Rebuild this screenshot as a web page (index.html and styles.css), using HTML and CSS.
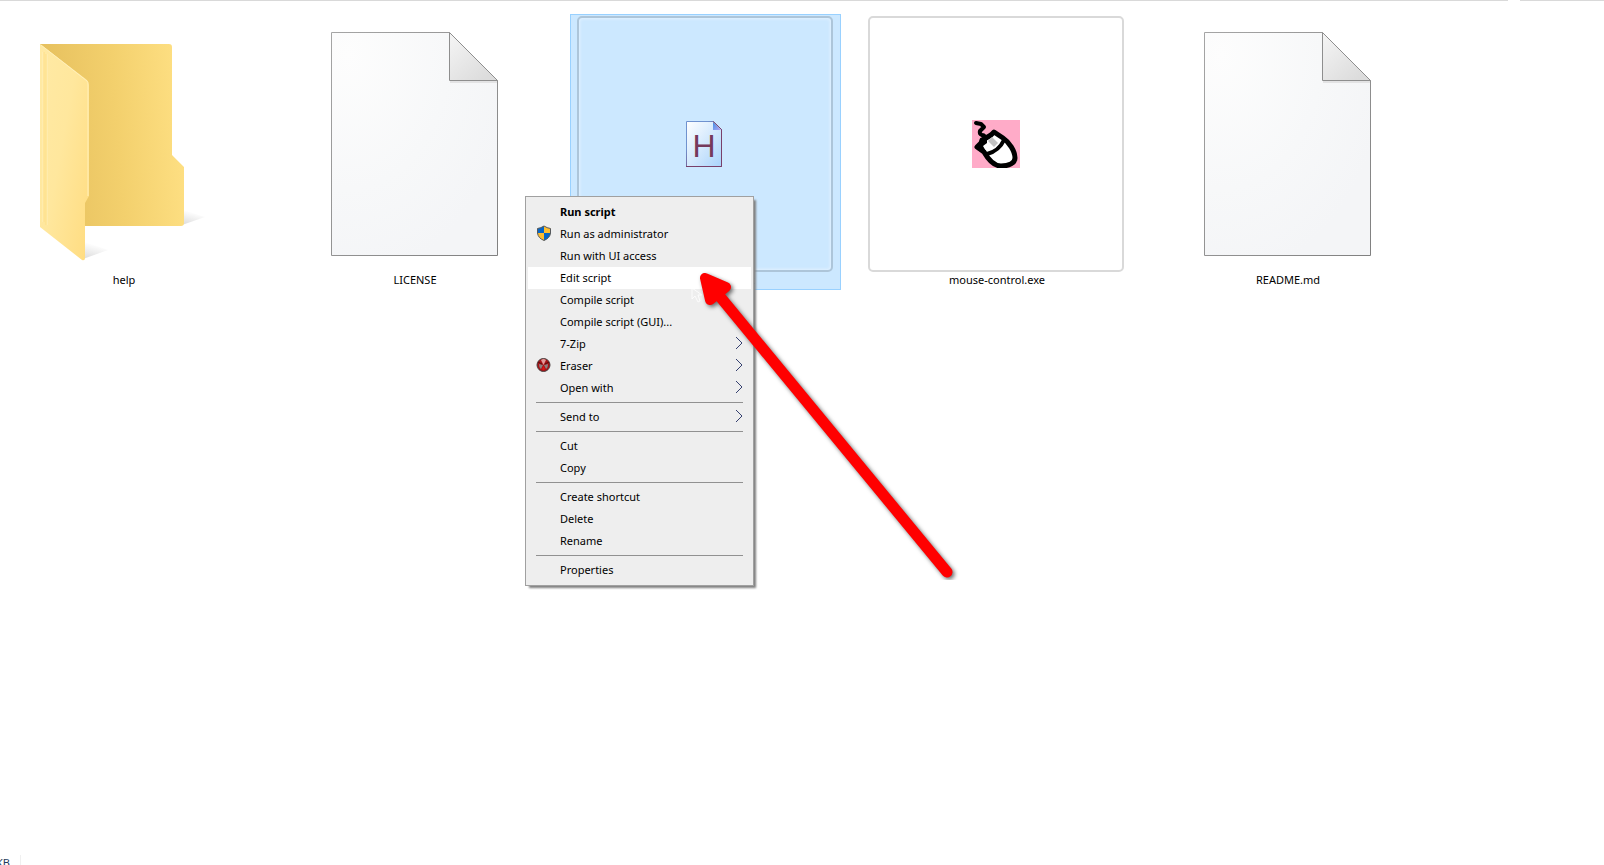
FILE: index.html
```html
<!DOCTYPE html>
<html lang="en">
	<head>
		<meta charset="utf-8">
		<title>mouse-control</title>
		<meta name="viewport" content="width=device-width, initial-scale=1">
		<link rel="stylesheet" href="styles.css">
	</head>
	<body>
		<div class="topline"><span class="line-main"></span><span class="line-end"></span></div>

		<main class="files">
			<button type="button" class="file">
				<svg class="thumb" viewBox="0 0 256 256" aria-hidden="true">
					<defs>
						<linearGradient id="back" x1="0" y1="0.1" x2="1" y2="0">
							<stop offset="0" stop-color="#e6c05e"/>
							<stop offset="0.5" stop-color="#f3d06d"/>
							<stop offset="1" stop-color="#ffe185"/>
						</linearGradient>
						<linearGradient id="front" x1="0" y1="0.2" x2="1" y2="1">
							<stop offset="0" stop-color="#ffe9a3"/>
							<stop offset="0.4" stop-color="#ffe79d"/>
							<stop offset="1" stop-color="#ffdc80"/>
						</linearGradient>
						<linearGradient id="shade" x1="0" y1="1" x2="0.4" y2="0">
							<stop offset="0" stop-color="#dadada"/>
							<stop offset="0.9" stop-color="#ffffff"/>
						</linearGradient>
					</defs>
					<path d="M189 194L210 201L187 209Z" fill="url(#shade)"/>
					<path d="M90 226L113 234L88 243Z" fill="url(#shade)"/>
					<path d="M45 28H174Q177 28 177 31V139L189 151V207Q189 210 186 210H85Z" fill="url(#back)"/>
					<path d="M45 28L92 64Q94 66 94 69V180L90 187V242Q90 245 87 244L45 211Z" fill="url(#front)"/>
					<path d="M48 36V206M52 38V209" stroke="#fff0bb" fill="none"/>
					<path d="M49 36V206M51 38V209" stroke="#ffdf86" fill="none"/>
					<path d="M46 29L92 65Q93 66 93 69V180" stroke="#fff0ba" fill="none"/>
				</svg>
				<span class="name">help</span>
			</button>

			<button type="button" class="file">
				<svg class="thumb" viewBox="0 0 256 256" aria-hidden="true">
					<defs>
						<radialGradient id="paper" cx="0.1" cy="0.1" r="1">
							<stop offset="0" stop-color="#fdfdfd"/>
							<stop offset="0.6" stop-color="#f7f8f9"/>
							<stop offset="1" stop-color="#f4f5f7"/>
						</radialGradient>
						<linearGradient id="fold" x1="0" y1="0.2" x2="0.7" y2="1">
							<stop offset="0" stop-color="#f2f2f2"/>
							<stop offset="1" stop-color="#dcdcdc"/>
						</linearGradient>
						<linearGradient id="edge" x1="0" y1="0" x2="1" y2="1">
							<stop offset="0" stop-color="#a5a5a5"/>
							<stop offset="1" stop-color="#808080"/>
						</linearGradient>
					</defs>
					<path d="M45.500 16.500H163.500L211.500 64.500V239.500H45.500Z" fill="url(#paper)" stroke="url(#edge)"/>
					<path d="M164 66H211" stroke="#e3e3e4" stroke-width="2"/>
					<path d="M163.500 16.500L211.500 64.500H163.500Z" fill="url(#fold)" stroke="#8e8e8e"/>
				</svg>
				<span class="name">LICENSE</span>
			</button>

			<button type="button" class="file selected">
				<span class="thumb framed">
					<svg class="small-icon" viewBox="0 0 48 48" aria-hidden="true">
						<defs>
							<linearGradient id="sheet" x1="0" y1="0" x2="1" y2="1">
								<stop offset="0" stop-color="#ffffff"/>
								<stop offset="1" stop-color="#a9d3fb"/>
							</linearGradient>
							<linearGradient id="sheetEdge" x1="0" y1="0" x2="1" y2="1">
								<stop offset="0.3" stop-color="#6f92cf"/>
								<stop offset="0.7" stop-color="#7b3f6c"/>
							</linearGradient>
							<linearGradient id="corner" x1="0" y1="0" x2="1" y2="1">
								<stop offset="0" stop-color="#3f8fe4"/>
								<stop offset="1" stop-color="#b5a6f5"/>
							</linearGradient>
						</defs>
						<path d="M5.500 1.500H32.500L40.500 9.500V46.500H5.500Z" fill="url(#sheet)" stroke="url(#sheetEdge)"/>
						<path d="M32 2V10H40Z" fill="url(#corner)"/>
						<path d="M32 1.500L40.500 9.500V46.500H5" fill="none" stroke="#79406a"/>
						<text x="23" y="37" class="letter">H</text>
					</svg>
				</span>
				<span class="name">mouse-control.ahk</span>
			</button>

			<button type="button" class="file">
				<span class="thumb framed">
					<svg class="small-icon" viewBox="0 0 48 48" aria-hidden="true">
						<rect width="48" height="48" fill="#ffabc8"/>
						<path d="M4 3L9 4L12 7L8 11Q7 14 10 15Q13 15 14 19" fill="none" stroke="#000" stroke-width="4" stroke-linejoin="round" stroke-linecap="round"/>
						<path d="M22 12L19 15L14 18L10 20L9 23L5 27L12 32C16 39 21 46 29 46C37 46 43 43 43 38C43 31 37 22 31 18Z" fill="#fff" stroke="#000" stroke-width="5" stroke-linejoin="round"/>
						<path d="M5 27L10 20L15 18L15 23L11 26L15 33L11 32Z"/>
						<path d="M16 21L20 17L26 23L22 27Z" fill="#c2c2c2"/>
						<path d="M32 20Q27 31 15 34" fill="none" stroke="#000" stroke-width="4"/>
					</svg>
				</span>
				<span class="name">mouse-control.exe</span>
			</button>

			<button type="button" class="file">
				<svg class="thumb" viewBox="0 0 256 256" aria-hidden="true">
					<path d="M45.500 16.500H163.500L211.500 64.500V239.500H45.500Z" fill="url(#paper)" stroke="url(#edge)"/>
					<path d="M164 66H211" stroke="#e3e3e4" stroke-width="2"/>
					<path d="M163.500 16.500L211.500 64.500H163.500Z" fill="url(#fold)" stroke="#8e8e8e"/>
				</svg>
				<span class="name">README.md</span>
			</button>
		</main>

		<footer class="status"><span>KB</span></footer>

		<!-- context menu -->
		<div class="menu">
			<button type="button" class="item default"><span class="icon"></span>Run script</button>
			<button type="button" class="item">
				<svg class="icon" viewBox="0 0 16 16" aria-hidden="true">
					<path d="M8 1Q5 3 1.500 3.500V8Q2 13 8 15.500Q14 13 14.500 8V3.500Q11 3 8 1Z" fill="#ffbe2e"/>
					<path d="M8 1Q5 3 1.500 3.500V8H8ZM8 8H14.500Q14 13 8 15.500Z" fill="#0766c6"/>
					<path d="M8 1Q5 3 1.500 3.500V8Q2 13 8 15.500Q14 13 14.500 8V3.500Q11 3 8 1Z" fill="none" stroke="#56595c"/>
				</svg>Run as administrator
			</button>
			<button type="button" class="item"><span class="icon"></span>Run with UI access</button>
			<button type="button" class="item hover"><span class="icon"></span>Edit script</button>
			<button type="button" class="item"><span class="icon"></span>Compile script</button>
			<button type="button" class="item"><span class="icon"></span>Compile script (GUI)...</button>
			<button type="button" class="item"><span class="icon"></span>7-Zip
				<svg class="sub" viewBox="0 0 8 12" aria-hidden="true"><path d="M1 0L7 6L1 12"/></svg>
			</button>
			<button type="button" class="item">
				<svg class="icon" viewBox="0 0 16 16" aria-hidden="true">
					<circle cx="7.500" cy="8" r="6.500" fill="#a81216" stroke="#4a4040"/>
					<path d="M7.500 8L5 3Q7.500 1 10 3Z" fill="#e09a9a"/>
					<path d="M7 8L3 7Q3 11 5 12ZM8 8L12 7Q12 11 10 12Z" fill="#8f7f7f"/>
					<path d="M6 12L7.500 9L9 12Q7.500 14 6 12Z" fill="#e01515"/>
					<path d="M2 5L6 7M13 5L9 7" stroke="#5c0a0c"/>
				</svg>Eraser
				<svg class="sub" viewBox="0 0 8 12" aria-hidden="true"><path d="M1 0L7 6L1 12"/></svg>
			</button>
			<button type="button" class="item"><span class="icon"></span>Open with
				<svg class="sub" viewBox="0 0 8 12" aria-hidden="true"><path d="M1 0L7 6L1 12"/></svg>
			</button>
			<hr>
			<button type="button" class="item"><span class="icon"></span>Send to
				<svg class="sub" viewBox="0 0 8 12" aria-hidden="true"><path d="M1 0L7 6L1 12"/></svg>
			</button>
			<hr>
			<button type="button" class="item"><span class="icon"></span>Cut</button>
			<button type="button" class="item"><span class="icon"></span>Copy</button>
			<hr>
			<button type="button" class="item"><span class="icon"></span>Create shortcut</button>
			<button type="button" class="item"><span class="icon"></span>Delete</button>
			<button type="button" class="item"><span class="icon"></span>Rename</button>
			<hr>
			<button type="button" class="item"><span class="icon"></span>Properties</button>
		</div>

		<!-- red arrow over the menu, with the mouse pointer beside it -->
		<svg class="arrow" viewBox="0 0 280 320" aria-hidden="true">
			<path d="M12 28V39L15 36L18 42L20 41L18 35H22Z" fill="none" stroke="#fff" stroke-opacity="0.8"/>
			<g class="red">
				<path d="M37 33L267 312" stroke-width="11" stroke-linecap="round"/>
				<path d="M25 18L46 27L30 40Z" stroke-width="10" stroke-linejoin="round"/>
			</g>
		</svg>
	</body>
</html>
```
FILE: styles.css
```css
*{
	box-sizing: border-box;
}
body{
	margin: 0;
	min-height: 100vh;
	display: flex;
	flex-direction: column;
	position: relative;
	overflow: hidden;
	background: #fff;
	color: #000;
	font-family: "Noto Sans", "Open Sans", sans-serif;
	font-size: 11px;
}
button{
	font: inherit;
	color: inherit;
	background: none;
	border: 0;
	padding: 0;
}

/* top edge of the file pane */
.topline{
	display: flex;
	gap: 12px;
	height: 1px;
}
.line-main{
	flex: 1;
	background: #d9d9d9;
}
.line-end{
	width: 84px;
	background: #d9d9d9;
}

/* file tiles */
.files{
	flex: 1;
	display: flex;
	flex-wrap: wrap;
	align-content: flex-start;
	gap: 20px;
	padding-top: 13px;
	margin-left: -12px;
}
.file{
	width: 271px;
	display: flex;
	flex-direction: column;
	border: 1px solid transparent;
	padding: 1px 7px 1px 6px;
}
.selected{
	background: #cce8ff;
	border-color: #99d1ff;
}
.thumb{
	display: block;
	width: 256px;
	height: 256px;
}
.framed{
	display: flex;
	align-items: center;
	justify-content: center;
	border: 2px solid #d9d9d9;
	border-radius: 5px;
}
.selected .framed{
	border-color: #adc5d9;
	box-shadow: inset 0 0 3px 1px #e2f1ff;
}
.small-icon{
	width: 48px;
	height: 48px;
}
.letter{
	font-family: "Liberation Sans", sans-serif;
	font-size: 32px;
	text-anchor: middle;
	fill: #753a5b;
}
.name{
	align-self: center;
	padding-left: 2px;
	line-height: 16px;
}

.status{
	height: 10px;
	margin-left: -4px;
	line-height: 16px;
	color: #1e395b;
}
.status span{
	display: inline-block;
	padding-right: 10px;
	border-right: 1px solid #f0f0f0;
}

/* context menu */
.menu{
	position: absolute;
	left: 525px;
	top: 196px;
	width: 229px;
	padding: 4px 2px;
	background: #eee;
	border: 1px solid #a0a0a0;
	box-shadow: 3px 3px 2px -1px #808080;
}
.item{
	display: flex;
	align-items: center;
	width: 100%;
	height: 22px;
	padding: 0 8px 2px;
	text-align: left;
}
.default{
	font-weight: bold;
}
.hover{
	background: #fff;
}
.icon{
	width: 16px;
	height: 16px;
	margin-right: 8px;
}
.sub{
	width: 8px;
	height: 12px;
	margin-left: auto;
	fill: none;
	stroke: #35406f;
}
.menu hr{
	height: 1px;
	margin: 3px 8px;
	border: 0;
	background: #919191;
}

.arrow{
	position: absolute;
	left: 680px;
	top: 260px;
	width: 280px;
	height: 320px;
	pointer-events: none;
}
.red{
	fill: #f00;
	stroke: #f00;
	filter: drop-shadow(2px 2px 2px #666);
}
```
